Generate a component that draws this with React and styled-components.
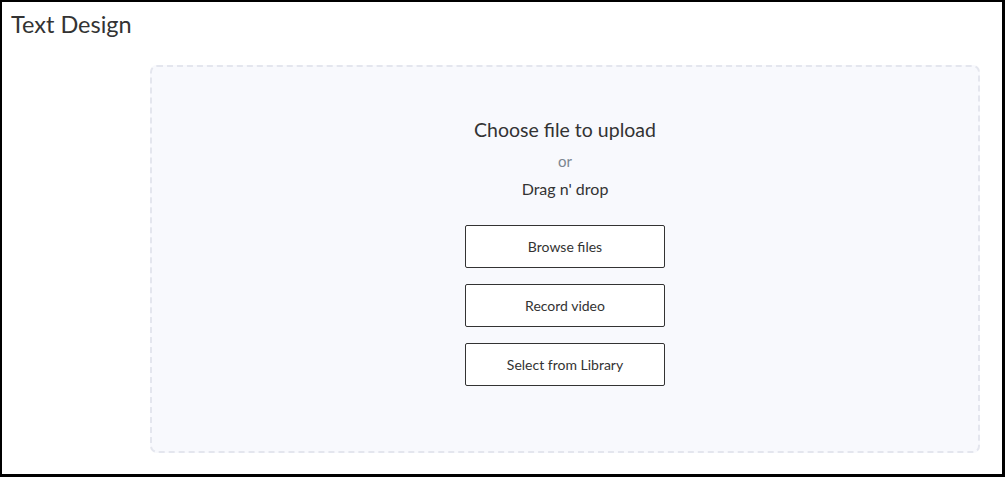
import React from "react";
import styled, { createGlobalStyle } from "styled-components";

const GlobalStyle = createGlobalStyle`
  html, body {
    margin: 0;
    padding: 0;
    background: #fff;
  }
  body {
    font-family: Lato, "Open Sans", sans-serif;
    color: #333;
  }
  * {
    box-sizing: border-box;
  }
`;

function App() {
  return (
    <>
      <GlobalStyle />
      <Frame>
        <Title>Text Design</Title>
        <DropZone>
          <DropHead>Choose file to upload</DropHead>
          <DropOr>or</DropOr>
          <DropSub>Drag n' drop</DropSub>
          <ButtonList>
            <UploadButton type="button">Browse files</UploadButton>
            <UploadButton type="button">Record video</UploadButton>
            <UploadButton type="button">Select from Library</UploadButton>
          </ButtonList>
        </DropZone>
      </Frame>
    </>
  );
}

const Frame = styled.div`
  width: 1005px;
  height: 477px;
  border: 2px solid #000;
  border-right-width: 3px;
  border-bottom-width: 3px;
  padding: 9px 22px 21px 9px;
  display: flex;
  flex-direction: column;
`;

const Title = styled.h1`
  margin: 0;
  font-size: 23.5px;
  font-weight: 400;
  line-height: 26px;
  color: #333;
`;

const DropZone = styled.div`
  flex: 1;
  margin: 28px 0 0 139px;
  background: #f8f9fd;
  border: 2px dashed #e4e6ee;
  border-radius: 7px;
  display: flex;
  flex-direction: column;
  align-items: center;
  padding-top: 51px;
`;

const DropHead = styled.div`
  font-size: 19.5px;
  line-height: 24px;
  color: #333;
`;

const DropOr = styled.div`
  margin-top: 10px;
  font-size: 15px;
  line-height: 18px;
  color: #7b8591;
`;

const DropSub = styled.div`
  margin-top: 9px;
  font-size: 16px;
  line-height: 20px;
  color: #333;
`;

const ButtonList = styled.div`
  margin-top: 26px;
  display: flex;
  flex-direction: column;
  gap: 16px;
`;

const UploadButton = styled.button`
  width: 200px;
  height: 43px;
  background: #fff;
  border: 1px solid #333;
  border-radius: 2px;
  font-family: Lato, "Open Sans", sans-serif;
  font-size: 14px;
  color: #333;
  cursor: pointer;
  padding: 0;
`;

export default App;
